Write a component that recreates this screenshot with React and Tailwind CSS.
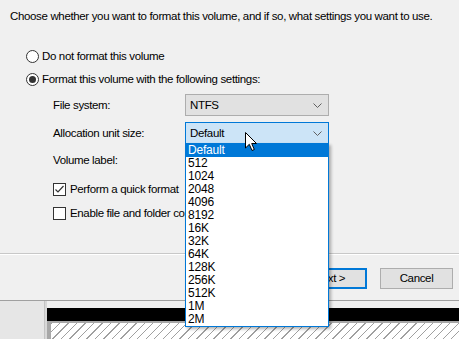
import React from 'react';

const sizes = ['Default', '512', '1024', '2048', '4096', '8192', '16K', '32K', '64K', '128K', '256K', '512K', '1M', '2M'];

function Chevron() {
    return (
        <svg width="9" height="5" viewBox="0 0 9 5" className="shrink-0">
            <path d="M0.5 0.5 L4.5 4.5 L8.5 0.5" fill="none" stroke="#606060" strokeWidth="1" />
        </svg>
    );
}

function Radio({ checked, label }) {
    return (
        <div className="flex items-center h-[16px]">
            <div className="w-[13px] h-[13px] rounded-full border border-[#333] bg-white flex items-center justify-center">
                {checked && <div className="w-[7px] h-[7px] rounded-full bg-[#333]" />}
            </div>
            <span className="ml-[3px]">{label}</span>
        </div>
    );
}

function Check({ checked, label }) {
    return (
        <div className="flex items-center h-[16px]">
            <div className="w-[13px] h-[13px] border border-[#333] bg-white flex items-center justify-center">
                {checked && (
                    <svg width="11" height="11" viewBox="0 0 11 11">
                        <path d="M1.5 5.5 L4 8 L9.5 2" fill="none" stroke="#333" strokeWidth="1.2" />
                    </svg>
                )}
            </div>
            <span className="ml-[4px] whitespace-nowrap">{label}</span>
        </div>
    );
}

export default function App() {
    return (
        <div className="relative w-[459px] h-[339px] overflow-hidden bg-[#f0f0f0] text-[11.5px] tracking-[-0.35px] leading-[16px] text-black font-['Liberation_Sans',Arial,sans-serif]">
            {/* Dialog body */}
            <div className="h-[300px] flex flex-col">
                <div className="pt-[8px] pl-[10px] whitespace-nowrap">
                    Choose whether you want to format this volume, and if so, what settings you want to use.
                </div>

                <div className="pl-[26px] mt-[24px] flex flex-col gap-[7px]">
                    <Radio label="Do not format this volume" />
                    <Radio checked label="Format this volume with the following settings:" />
                </div>

                <div className="pl-[53px] mt-[7px] flex flex-col">
                    <div className="flex items-center h-[22px]">
                        <span className="w-[132px]">File system:</span>
                        <div className="w-[144px] h-[22px] bg-[#e1e1e1] border border-[#adadad] flex items-center justify-between pl-[4px] pr-[6px]">
                            <span>NTFS</span>
                            <Chevron />
                        </div>
                    </div>
                    <div className="flex items-center h-[22px] mt-[6px]">
                        <span className="w-[132px]">Allocation unit size:</span>
                        <div className="w-[144px] h-[22px] bg-[#cce4f7] border border-[#0078d7] flex items-center justify-between pl-[4px] pr-[6px]">
                            <span>Default</span>
                            <Chevron />
                        </div>
                    </div>
                    <div className="flex items-center h-[22px] mt-[5px]">
                        <span className="w-[132px]">Volume label:</span>
                    </div>
                    <div className="mt-[10px] flex flex-col gap-[8px]">
                        <Check checked label="Perform a quick format" />
                        <Check label="Enable file and folder compression" />
                    </div>
                </div>

                <div className="mt-auto">
                    <div className="h-px bg-[#c8c8c8]" />
                    <div className="h-[1px] bg-white" />
                    <div className="flex justify-end gap-[13px] pr-[6px] pt-[13px] pb-[11px]">
                        <button className="w-[75px] h-[21px] bg-[#e1e1e1] border-2 border-[#0078d7] text-center leading-[17px]">Next &gt;</button>
                        <button className="w-[73px] h-[21px] bg-[#e1e1e1] border border-[#adadad] text-center leading-[19px]">Cancel</button>
                    </div>
                </div>
            </div>

            {/* Disk map strip */}
            <div className="h-px bg-[#a0a0a0]" />
            <div className="flex h-[38px]">
                <div className="w-[45px] bg-[#e6e6e6] border-r border-[#c4c4c4]" />
                <div className="w-[2px] bg-[#d8d8d8]" />
                <div className="flex-1 flex flex-col pt-[7px] bg-[#f0f0f0]">
                    <div className="h-[13px] bg-black" />
                    <div className="flex-1 border-t-[2px] border-l-[4px] border-[#a8a8a8] bg-[repeating-linear-gradient(-45deg,#ffffff_0px,#ffffff_5px,#a0a0a0_5px,#a0a0a0_6px)]" />
                </div>
            </div>

            {/* Open dropdown list */}
            <div className="absolute left-[185px] top-[143px] w-[144px] bg-white border border-[#0078d7] shadow-[2px_2px_3px_rgba(0,0,0,0.3)] leading-[13px] text-[12px] tracking-[-0.2px]">
                {sizes.map((s, i) => (
                    <div key={s} className={i === 0 ? 'h-[13px] pl-[2px] bg-[#0078d7] text-white' : 'h-[13px] pl-[2px]'}>
                        {s}
                    </div>
                ))}
            </div>

            {/* Mouse cursor */}
            <svg className="absolute left-[245px] top-[132px]" width="13" height="20" viewBox="0 0 13 20">
                <path d="M0.5 0.5 L0.5 16 L4.3 12.3 L7 18.5 L9.3 17.5 L6.7 11.5 L11.5 11.5 Z" fill="white" stroke="black" strokeWidth="1" strokeLinejoin="miter" />
            </svg>
        </div>
    );
}
